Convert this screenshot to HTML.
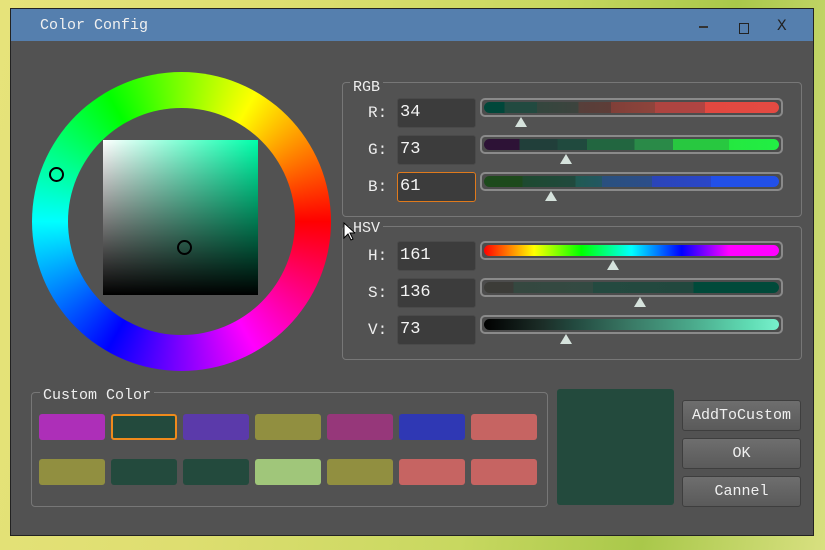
<!DOCTYPE html>
<html><head><style>
*{margin:0;padding:0;box-sizing:border-box}
body{width:825px;height:550px;overflow:hidden;position:relative;background:linear-gradient(100deg,#e6e37a 0%,#dede70 30%,#c8d860 60%,#a9c84a 80%,#d8e080 100%);font-family:"Liberation Mono",monospace;color:#eee}
.win{position:absolute;left:10px;top:8px;width:804px;height:528px;background:#525252;border:1px solid #222}
.title{position:absolute;left:0;top:0;width:802px;height:32px;background:#557fae;font-size:15px;color:#f0f0f0;line-height:34px;padding-left:29px}
.a{position:absolute}
.grp{position:absolute;border:1px solid #777;border-radius:4px}
.gl{position:absolute;background:#525252;font-size:15px;line-height:15px;padding:0 3px;color:#eee}
.lbl{position:absolute;font-size:16px;color:#eee}
.inp{position:absolute;width:79px;height:30px;background:#3c3c3c;border:1px solid #4a4a4a;border-radius:3px;font-size:17px;line-height:28px;padding-left:2px;color:#f4f4f4}
.sl{position:absolute;left:469px;width:303px;height:19px;border:2px solid #8a8a8a;border-radius:5px;background:#4c4c4c}
.sl i{position:absolute;left:2px;top:2px;right:2px;bottom:2px;border-radius:6px}
.tri{position:absolute;width:0;height:0;border-left:6px solid transparent;border-right:6px solid transparent;border-bottom:10px solid #d5e2dc}
.sw{position:absolute;width:66px;height:26px;border-radius:3px}
.btn{position:absolute;left:671px;width:119px;height:31px;background:linear-gradient(#6e6e6e,#5a5a5a);border:1px solid #3e3e3e;border-radius:3px;font-size:15px;text-align:center;line-height:30px;color:#f0f0f0}
</style></head><body>
<div class="win">
<div class="title">Color Config
<span class="a" style="left:688px;top:17px;width:9px;height:2px;background:#333"></span>
<span class="a" style="left:728px;top:14px;width:10px;height:11px;border:1.5px solid #222"></span>
<span class="a" style="left:766px;top:0;font-size:16px;color:#222">X</span>
</div>
<div class="a" style="left:21px;top:63px;width:299px;height:299px;border-radius:50%;background:conic-gradient(hsl(90,100%,50%) 0deg,hsl(60,100%,50%) 30deg,hsl(30,100%,50%) 60deg,hsl(0,100%,50%) 90deg,hsl(330,100%,50%) 120deg,hsl(300,100%,50%) 150deg,hsl(270,100%,50%) 180deg,hsl(240,100%,50%) 210deg,hsl(210,100%,50%) 240deg,hsl(180,100%,50%) 270deg,hsl(150,100%,50%) 300deg,hsl(120,100%,50%) 330deg,hsl(90,100%,50%) 360deg)"></div>
<div class="a" style="left:57px;top:99px;width:227px;height:227px;border-radius:50%;background:#525252"></div>
<div class="a" style="left:92px;top:131px;width:155px;height:155px;background:linear-gradient(to bottom,rgba(0,0,0,0),#000),linear-gradient(to right,#fff,#00ffaa)"></div>
<div class="a" style="left:38px;top:158px;width:15px;height:15px;border:2px solid #000;border-radius:50%"></div>
<div class="a" style="left:166px;top:231px;width:15px;height:15px;border:2px solid #000;border-radius:50%"></div>
<div class="grp" style="left:331px;top:73px;width:460px;height:135px"></div>
<div class="gl" style="left:339px;top:71px">RGB</div>
<div class="lbl" style="left:357px;top:95px">R:</div>
<div class="inp" style="left:386px;top:89px">34</div>
<div class="sl" style="top:89px"><i style="background:linear-gradient(to right,#00473a 0,#00473a 7%,#224a40 7%,#224a40 18%,#34463e 18%,#3d443e 32%,#573f3a 32%,#5e3d38 43%,#803f38 43%,#8e443c 58%,#ad4440 58%,#b04442 75%,#e24840 75%,#e44a42 100%)"></i></div>
<div class="tri" style="left:504px;top:108px"></div>
<div class="lbl" style="left:357px;top:132px">G:</div>
<div class="inp" style="left:386px;top:126px">73</div>
<div class="sl" style="top:126px"><i style="background:linear-gradient(to right,#2d1236 0,#2d1236 12%,#213f3a 12%,#213f3a 25%,#204a3e 25%,#204a3e 35%,#226640 35%,#226640 51%,#2a8a48 51%,#2a8a48 64%,#28c840 64%,#28c840 83%,#24e840 83%,#22ee44 100%)"></i></div>
<div class="tri" style="left:549px;top:145px"></div>
<div class="lbl" style="left:357px;top:169px">B:</div>
<div class="inp" style="left:386px;top:163px;border-color:#e07a1c">61</div>
<div class="sl" style="top:163px"><i style="background:linear-gradient(to right,#1d4a1c 0,#1d4a1c 13%,#1e4a30 13%,#204a3e 31%,#205a52 31%,#235862 40%,#2a507e 40%,#2c4e8a 57%,#2b45b8 57%,#2a46c8 77%,#2250e8 77%,#2250e8 100%)"></i></div>
<div class="tri" style="left:534px;top:182px"></div>
<div class="grp" style="left:331px;top:217px;width:460px;height:134px"></div>
<div class="gl" style="left:339px;top:212px">HSV</div>
<div class="lbl" style="left:357px;top:238px">H:</div>
<div class="inp" style="left:386px;top:232px">161</div>
<div class="sl" style="top:232px"><i style="background:linear-gradient(to right,#f00,#ff0 17%,#0f0 33%,#0ff 50%,#00f 67%,#f0f 83%,#f0f 100%)"></i></div>
<div class="tri" style="left:596px;top:251px"></div>
<div class="lbl" style="left:357px;top:275px">S:</div>
<div class="inp" style="left:386px;top:269px">136</div>
<div class="sl" style="top:269px"><i style="background:linear-gradient(to right,#3c3c38 0,#3c3c38 10%,#354840 10%,#334a42 37%,#244a40 37%,#22483e 71%,#004a3a 71%,#004a3a 100%)"></i></div>
<div class="tri" style="left:623px;top:288px"></div>
<div class="lbl" style="left:357px;top:312px">V:</div>
<div class="inp" style="left:386px;top:306px">73</div>
<div class="sl" style="top:306px"><i style="background:linear-gradient(to right,#000,#1c2e28 20%,#22483e 30%,#3a7a66 50%,#4aa88a 70%,#60dcb4 90%,#78f0cc 100%)"></i></div>
<div class="tri" style="left:549px;top:325px"></div>
<div class="grp" style="left:20px;top:383px;width:517px;height:115px"></div>
<div class="gl" style="left:29px;top:379px">Custom Color</div>
<div class="sw" style="left:28px;top:405px;background:#ad2fb8"></div>
<div class="sw" style="left:100px;top:405px;background:#234a3d;border:2px solid #f08a1c"></div>
<div class="sw" style="left:172px;top:405px;background:#5b3aaa"></div>
<div class="sw" style="left:244px;top:405px;background:#918f40"></div>
<div class="sw" style="left:316px;top:405px;background:#96377a"></div>
<div class="sw" style="left:388px;top:405px;background:#2f38b4"></div>
<div class="sw" style="left:460px;top:405px;background:#c66462"></div>
<div class="sw" style="left:28px;top:450px;background:#918f40"></div>
<div class="sw" style="left:100px;top:450px;background:#234a3d"></div>
<div class="sw" style="left:172px;top:450px;background:#234a3d"></div>
<div class="sw" style="left:244px;top:450px;background:#a0c67a"></div>
<div class="sw" style="left:316px;top:450px;background:#918f40"></div>
<div class="sw" style="left:388px;top:450px;background:#c66462"></div>
<div class="sw" style="left:460px;top:450px;background:#c66462"></div>
<div class="a" style="left:546px;top:380px;width:117px;height:116px;background:#234a3d;border-radius:3px"></div>
<div class="btn" style="top:391px">AddToCustom</div>
<div class="btn" style="top:429px">OK</div>
<div class="btn" style="top:467px">Cannel</div>
</div>
<svg class="a" style="position:absolute;left:343px;top:222px" width="12" height="20"><path d="M1 1 L1 16 L5 12 L8 18 L10 17 L7 11 L12 11 Z" fill="#fff" stroke="#000" stroke-width="1"/></svg>
</body></html>
